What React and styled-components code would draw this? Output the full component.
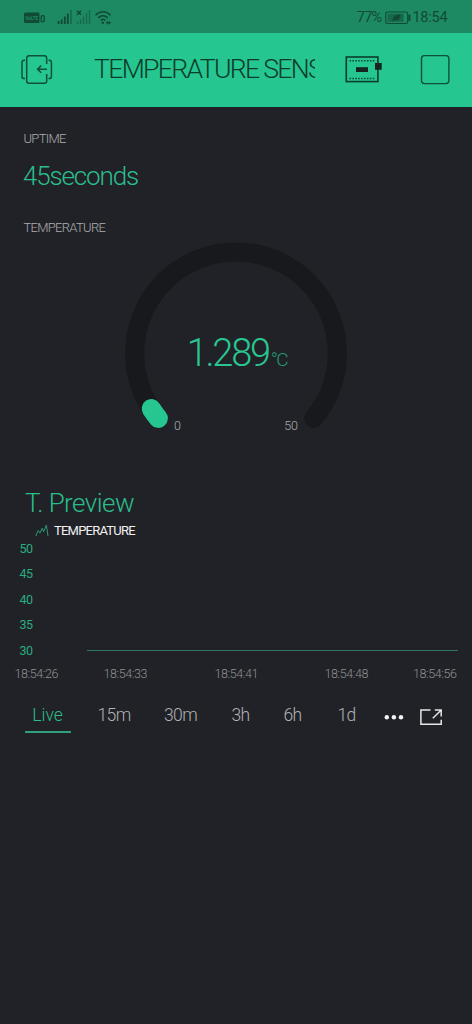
import React from 'react';
import styled, { createGlobalStyle } from 'styled-components';

const GlobalStyle = createGlobalStyle`
  * {
    box-sizing: border-box;
  }

  body {
    margin: 0;
    background: #212227;
    font-family: Roboto, 'Liberation Sans', sans-serif;
    font-weight: 300;
  }

  svg {
    display: block;
    flex: none;
  }
`;

const Screen = styled.div`
  width: 472px;
  height: 1024px;
  overflow: hidden;
  background: #212227;
`;

const StatusBar = styled.div`
  display: flex;
  align-items: center;
  justify-content: space-between;
  height: 33px;
  padding: 2px 24px 0 23px;
  background: #1d8a63;
`;

const StatusGroup = styled.div`
  display: flex;
  align-items: center;
`;

const StatusText = styled.span`
  margin-right: ${props => props.$gap || '0'};
  color: #114a37;
  font-size: 14.5px;
  font-weight: 400;
  line-height: 20px;
  letter-spacing: ${props => props.$spacing || '0'};
`;

const Header = styled.header`
  display: flex;
  align-items: center;
  height: 73.5px;
  padding: 0 22px 0 21px;
  background: #25c68f;
`;

const Title = styled.h1`
  width: 220.5px;
  margin: 0 30px 2px 41px;
  overflow: hidden;
  color: #0d3c2b;
  font-size: 26.7px;
  font-weight: 300;
  line-height: 40px;
  letter-spacing: -1.72px;
  white-space: nowrap;
`;

const HeaderSpacer = styled.div`
  flex: 1;
`;

const WidgetLabel = styled.div`
  height: 20px;
  padding-left: 23.5px;
  color: #acadb0;
  font-size: 13px;
  font-weight: 300;
  line-height: 20px;
  letter-spacing: -0.7px;
`;

const UptimeWidget = styled.section`
  height: 111px;
  padding-top: 22.5px;
`;

const UptimeValue = styled.div`
  margin-top: 6.5px;
  padding-left: 23px;
  color: #2bbd8b;
  font-size: 26px;
  line-height: 40px;
  letter-spacing: -1.15px;
`;

const GaugeWidget = styled.section`
  height: 267.5px;
`;

const Gauge = styled.div`
  display: grid;
  width: 222px;
  height: 190px;
  margin: 4.5px auto 0;

  > * {
    grid-area: 1 / 1;
  }
`;

const Reading = styled.div`
  display: flex;
  align-items: baseline;
  justify-content: center;
  height: 44px;
  margin-top: 89px;
  padding-left: 2px;
  color: #2ac690;
  font-size: 38px;
  line-height: 44px;
  letter-spacing: -2.3px;
`;

const Unit = styled.span`
  margin-left: 2px;
  color: #259c76;
  font-size: 19px;
  letter-spacing: -1.5px;
`;

const GaugeRange = styled.div`
  display: flex;
  align-self: end;
  justify-content: space-between;
  margin-bottom: -1px;
  padding: 0 49px 0 49px;
  color: #acadb0;
  font-size: 12.5px;
  line-height: 14px;
`;

const ChartTitle = styled.h2`
  margin: 0;
  padding-left: 25px;
  color: #2bbd8b;
  font-size: 26px;
  font-weight: 300;
  line-height: 36px;
  letter-spacing: -0.55px;
`;

const Legend = styled.div`
  display: flex;
  align-items: center;
  gap: 5px;
  height: 20px;
  margin-top: -0.5px;
  padding-left: 35px;
  color: #f1f1f2;
  font-size: 13px;
  font-weight: 400;
  letter-spacing: -0.78px;
`;

const Plot = styled.div`
  display: flex;
  height: 127px;
  margin-top: -4.5px;
  padding: 0 14px 0 19.5px;
`;

const YAxis = styled.div`
  display: flex;
  flex-direction: column;
  width: 67.5px;
  color: #2aac81;
  font-size: 12.5px;
  font-weight: 400;
  line-height: 25.4px;
  letter-spacing: -0.5px;
`;

const PlotArea = styled.div`
  flex: 1;
  height: 114.5px;
  border-bottom: 1px solid #2f7362;
`;

const XAxis = styled.div`
  display: grid;
  grid-template-columns: 89px 111px 110px 88.5px 45px;
  margin-top: 1px;
  padding-left: 14.5px;
  color: #8f9094;
  font-size: 12.5px;
  line-height: 20px;
  letter-spacing: -0.42px;
`;

const Tabs = styled.nav`
  display: grid;
  grid-template-columns: 46px 87px 46px 74px 30px 78px 17px 56px;
  align-items: center;
  justify-items: center;
  height: 34px;
  margin-top: 15px;
  padding-left: 24.5px;
`;

const Tab = styled.div`
  width: ${props => (props.$active ? '100%' : 'auto')};
  height: 34px;
  border-bottom: 2px solid ${props => (props.$active ? '#2f9f7c' : 'transparent')};
  color: ${props => (props.$active ? '#2bbd8b' : '#b0b1b4')};
  font-size: 17.5px;
  line-height: 33px;
  letter-spacing: ${props => (props.$active ? '0' : '-0.6px')};
  text-align: center;
`;

const SignalIcons = () => (
  <svg width="90" height="20" viewBox="23 7 90 20" fill="none">
    <rect x="24" y="11.5" width="15.5" height="10.5" rx="1.5" fill="#114a37" />
    <text x="25.4" y="19" fontSize="6" fontWeight="700" fill="#1d8a63" textLength="12.6" lengthAdjust="spacingAndGlyphs">VoLTE</text>
    <rect x="41.2" y="14.6" width="3" height="6" rx="0.8" stroke="#114a37" strokeWidth="1.4" />
    <path d="M58.6 20v3M61.7 18.5V23M64.8 15.5V23M67.8 12.5V23" stroke="#114a37" strokeWidth="1.8" />
    <path d="M71 9v14" stroke="#17694c" strokeWidth="1.6" />
    <path d="M77 9.7l4 4M81 9.7l-4 4" stroke="#114a37" strokeWidth="1.6" />
    <path d="M77.5 20.5V23M80.5 18.5V23M83.5 15.5V23M86.5 12V23M89.5 9v14" stroke="#17694c" strokeWidth="1.3" />
    <path d="M95.5 14.2c4.3-4.5 10.7-4.5 15 0M98.2 16.9c2.8-2.8 6.8-2.8 9.6 0M100.7 19.4c1.4-1.4 3.2-1.4 4.6 0" stroke="#114a37" strokeWidth="1.5" />
    <circle cx="102.8" cy="21.8" r="1.2" fill="#114a37" />
    <path d="M106 21.7h5M107.4 20.2v3M109.4 20.2v3" stroke="#114a37" strokeWidth="1.1" />
  </svg>
);

const BatteryIcon = () => (
  <svg width="27" height="14" viewBox="384 10 27 14">
    <rect x="384.7" y="11" width="22" height="11.5" rx="1.8" fill="none" stroke="#114a37" strokeWidth="1.1" />
    <rect x="386.5" y="12.8" width="16" height="8" fill="#17694c" />
    <path d="M391.5 20.5c0-5 3-7 8-7.2 0 5-2.6 7-6.4 6l-1.3 1.5z" fill="#114a37" />
    <rect x="407.4" y="13.6" width="2" height="6.4" rx="0.6" fill="#114a37" />
  </svg>
);

const ExitIcon = () => (
  <svg width="32" height="30" viewBox="21 55 32 30" fill="none" stroke="#0f5039" strokeWidth="1.5">
    <path d="M46.7 64V58a2.3 2.3 0 0 0-2.3-2.3H29A2.3 2.3 0 0 0 26.7 58v23a2.3 2.3 0 0 0 2.3 2.3h15.4a2.3 2.3 0 0 0 2.3-2.3v-7" />
    <path d="M25 60.2h-.8a2.2 2.2 0 0 0-2.2 2.2v14a2.2 2.2 0 0 0 2.2 2.2h.8M48.5 60.2h.7a2.2 2.2 0 0 1 2.2 2.2v14a2.2 2.2 0 0 1-2.2 2.2h-.7" />
    <path d="M47 69.2h-9M41.2 65.6L37.6 69.2l3.6 3.6" />
  </svg>
);

const BoardIcon = () => (
  <svg width="37" height="27" viewBox="345 56 37 27" fill="none">
    <rect x="346.3" y="57" width="31.6" height="24.6" stroke="#0d3c2b" strokeWidth="1.6" />
    <path d="M349.5 60.7h25M349.5 78.5h25" stroke="#0f5039" strokeWidth="1.5" strokeDasharray="1.6 1.3" />
    <rect x="356" y="67.2" width="12" height="4.8" fill="#16261f" />
    <rect x="375" y="63" width="6.7" height="6.8" fill="#16261f" />
  </svg>
);

const SquareIcon = () => (
  <svg width="30" height="30" viewBox="420 54 30 30">
    <rect x="421.5" y="54.6" width="27.4" height="28" rx="3" fill="none" stroke="#0f5039" strokeWidth="1.4" />
  </svg>
);

const GaugeArc = () => (
  <svg width="222" height="190" viewBox="125 242 222 190" fill="none" strokeWidth="19.2" strokeLinecap="round">
    <path d="M158.3 418.3A101.3 101.3 0 1 1 313.7 418.3" stroke="#18191d" />
    <path d="M158.3 418.3A101.3 101.3 0 0 1 151.3 408.7" stroke="#25c68f" />
  </svg>
);

const LegendIcon = () => (
  <svg width="14" height="13" viewBox="0 0 14 13" fill="none" stroke="#2b9874" strokeWidth="1">
    <path d="M0.7 12.2L3.2 6.5L5 9L7.2 4.2L8.6 7.8L11.4 1L13 12" />
  </svg>
);

const MoreIcon = () => (
  <svg width="20" height="8" viewBox="0 0 20 8" fill="#f4f4f5">
    <circle cx="2.8" cy="5.3" r="2.2" />
    <circle cx="9.9" cy="5.3" r="2.2" />
    <circle cx="17" cy="5.3" r="2.2" />
  </svg>
);

const ExpandIcon = () => (
  <svg width="22" height="20" viewBox="420 706 22 20" fill="none" stroke="#e6e6e8" strokeWidth="1.5">
    <path d="M430.5 710H420.9v14.3h20.3v-4.5" />
    <path d="M434.8 710h6.4v6.4M441 710.2l-8.2 8" />
  </svg>
);

const yLabels = [50, 45, 40, 35, 30];
const xLabels = ['18:54:26', '18:54:33', '18:54:41', '18:54:48', '18:54:56'];
const ranges = ['Live', '15m', '30m', '3h', '6h', '1d'];

const App = () => {
  return (
    <Screen>
      <GlobalStyle />
      <StatusBar>
        <SignalIcons />
        <StatusGroup>
          <StatusText $spacing="-0.8px" $gap="4px">77%</StatusText>
          <BatteryIcon />
          <StatusText $spacing="-0.2px" $gap="0.5px">18:54</StatusText>
        </StatusGroup>
      </StatusBar>

      <Header>
        <ExitIcon />
        <Title>TEMPERATURE SENSOR</Title>
        <BoardIcon />
        <HeaderSpacer />
        <SquareIcon />
      </Header>

      <UptimeWidget>
        <WidgetLabel>UPTIME</WidgetLabel>
        <UptimeValue>45seconds</UptimeValue>
      </UptimeWidget>

      <GaugeWidget>
        <WidgetLabel>TEMPERATURE</WidgetLabel>
        <Gauge>
          <GaugeArc />
          <Reading>
            1.289<Unit>°C</Unit>
          </Reading>
          <GaugeRange>
            <span>0</span>
            <span>50</span>
          </GaugeRange>
        </Gauge>
      </GaugeWidget>

      <section>
        <ChartTitle>T. Preview</ChartTitle>
        <Legend>
          <LegendIcon />
          TEMPERATURE
        </Legend>
        <Plot>
          <YAxis>
            {yLabels.map(label => (
              <span key={label}>{label}</span>
            ))}
          </YAxis>
          <PlotArea />
        </Plot>
        <XAxis>
          {xLabels.map(label => (
            <span key={label}>{label}</span>
          ))}
        </XAxis>
        <Tabs>
          {ranges.map(range => (
            <Tab key={range} $active={range === 'Live'}>{range}</Tab>
          ))}
          <MoreIcon />
          <ExpandIcon />
        </Tabs>
      </section>
    </Screen>
  );
};

export default App;
